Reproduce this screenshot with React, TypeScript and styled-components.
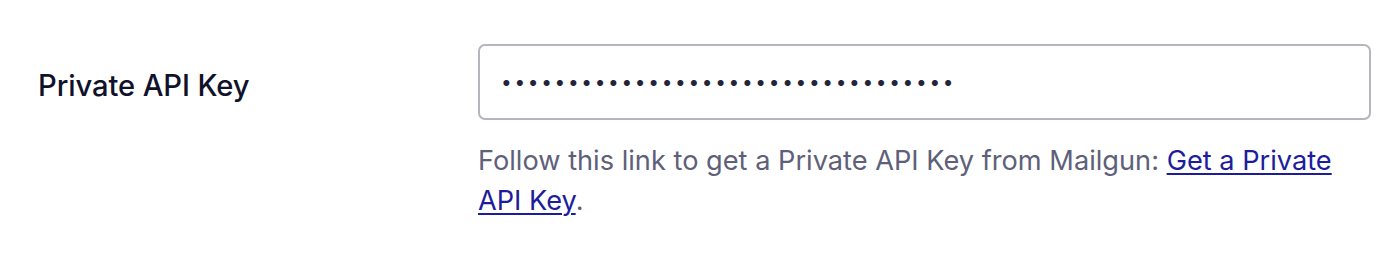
import React from "react";
import styled, { createGlobalStyle } from "styled-components";

const GlobalStyle = createGlobalStyle`
  html, body {
    margin: 0;
    padding: 0;
    background: #ffffff;
  }
  body {
    font-family: Inter, "Liberation Sans", sans-serif;
    -webkit-font-smoothing: antialiased;
  }
`;

const Page = styled.div`
  width: 1400px;
  height: 270px;
  box-sizing: border-box;
  padding: 44px 29px 0 38px;
`;

const Row = styled.div`
  display: grid;
  grid-template-columns: 440px 1fr;
  align-items: start;
`;

const Label = styled.label`
  padding-top: 4px;
  font-size: 29.2px;
  font-weight: 500;
  color: #10112b;
  line-height: 76px;
  letter-spacing: -0.1px;
`;

const Field = styled.div`
  display: flex;
  flex-direction: column;
  gap: 21px;
`;

const KeyInput = styled.input`
  box-sizing: border-box;
  width: 100%;
  height: 76px;
  padding: 0 21px;
  border: 2px solid #b5b5bd;
  border-radius: 7px;
  background: #ffffff;
  font-family: Inter, "Liberation Sans", sans-serif;
  font-size: 19px;
  letter-spacing: 2.7px;
  color: #23243a;
  outline: none;
`;

const Help = styled.p`
  margin: 0;
  font-size: 27.2px;
  line-height: 40px;
  color: #5e6079;
`;

const HelpLink = styled.a`
  color: #1d1d9c;
  text-decoration: underline;
  text-underline-offset: 3px;
  text-decoration-thickness: 2px;
`;

export default function App() {
  return (
    <>
      <GlobalStyle />
      <Page>
        <Row>
          <Label htmlFor="mailgun-key">Private API Key</Label>
          <Field>
            <KeyInput
              id="mailgun-key"
              type="password"
              defaultValue="abcdefghijklmnopqrstuvwxyz01234567"
            />
            <Help>
              Follow this link to get a Private API Key from Mailgun:{" "}
              <HelpLink href="#">Get a Private API Key</HelpLink>.
            </Help>
          </Field>
        </Row>
      </Page>
    </>
  );
}
